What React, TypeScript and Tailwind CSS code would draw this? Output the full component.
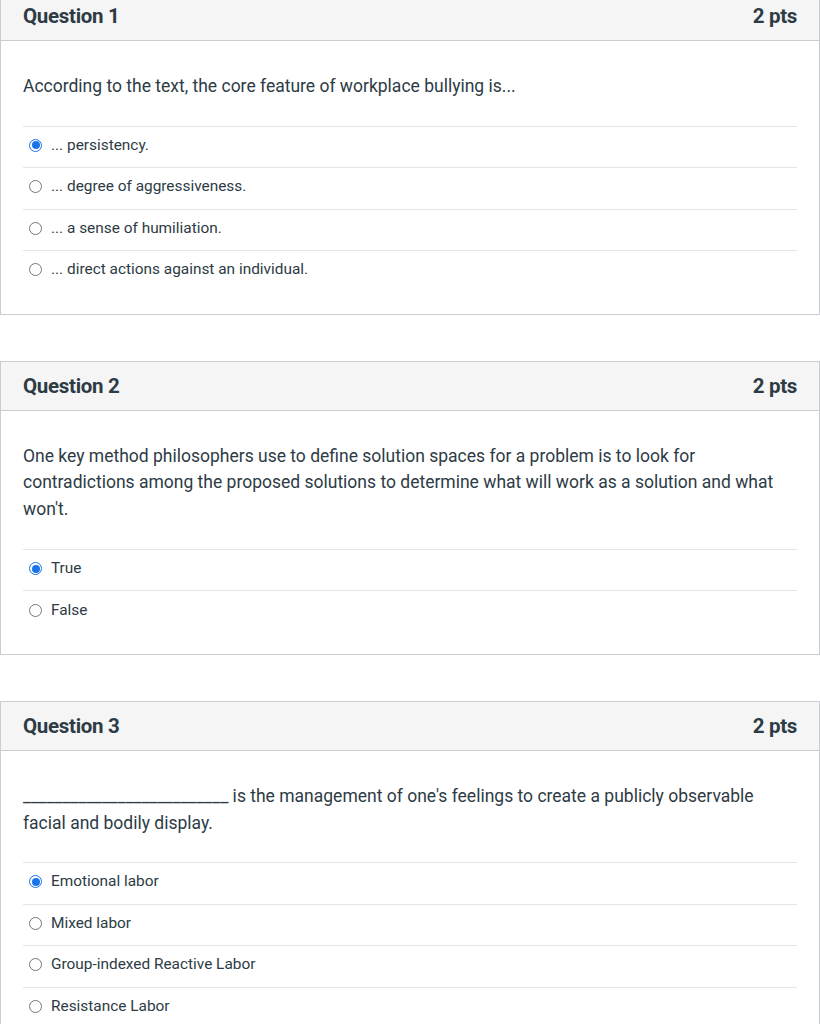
import React from 'react';

type Question = {
  title: string;
  points: string;
  text: React.ReactNode;
  answers: string[];
  selected: number;
};

const questions: Question[] = [
  {
    title: 'Question 1',
    points: '2 pts',
    text: 'According to the text, the core feature of workplace bullying is...',
    answers: [
      '... persistency.',
      '... degree of aggressiveness.',
      '... a sense of humiliation.',
      '... direct actions against an individual.',
    ],
    selected: 0,
  },
  {
    title: 'Question 2',
    points: '2 pts',
    text: "One key method philosophers use to define solution spaces for a problem is to look for contradictions among the proposed solutions to determine what will work as a solution and what won't.",
    answers: ['True', 'False'],
    selected: 0,
  },
  {
    title: 'Question 3',
    points: '2 pts',
    text: "__________________________ is the management of one's feelings to create a publicly observable facial and bodily display.",
    answers: ['Emotional labor', 'Mixed labor', 'Group-indexed Reactive Labor', 'Resistance Labor'],
    selected: 0,
  },
];

const Radio: React.FC<{ checked: boolean }> = ({ checked }) =>
  checked ? (
    <span className="w-[13px] h-[13px] rounded-full border-[1.5px] border-[#1a73e8] flex items-center justify-center shrink-0">
      <span className="w-[8px] h-[8px] rounded-full bg-[#1a73e8]"></span>
    </span>
  ) : (
    <span className="w-[13px] h-[13px] rounded-full border border-[#767676] bg-white shrink-0"></span>
  );

const QuestionCard: React.FC<{ q: Question; first?: boolean }> = ({ q, first }) => (
  <div className={`border border-[#c7cdd1] bg-white ${first ? '-mt-[9px]' : 'mt-[46px]'}`}>
    <div className="h-[49px] bg-[#f5f5f5] border-b border-[#c7cdd1] flex items-center justify-between px-[22px] pt-[1px]">
      <h2 className="text-[20.5px] font-bold text-[#2d3b45] tracking-[-0.3px]">{q.title}</h2>
      <span className="text-[20.5px] font-bold text-[#2d3b45] tracking-[-0.3px]">{q.points}</span>
    </div>
    <div className="px-[22px] pt-[32px] pb-[22px]">
      <p className="text-[17.5px] leading-[26.7px] text-[#2d3b45] pb-[26px]">{q.text}</p>
      <div>
        {q.answers.map((a, i) => (
          <div key={i} className="h-[41.5px] border-t border-[#e3e6e8] flex items-center gap-[9px] pl-[6px] pb-[3px]">
            <Radio checked={i === q.selected} />
            <span className="text-[15.4px] text-[#2d3b45]">{a}</span>
          </div>
        ))}
      </div>
    </div>
  </div>
);

export default function App() {
  return (
    <div className="w-[820px] min-h-[1024px] bg-white overflow-hidden" style={{ fontFamily: 'Roboto, "Liberation Sans", sans-serif' }}>
      {questions.map((q, i) => (
        <QuestionCard key={i} q={q} first={i === 0} />
      ))}
    </div>
  );
}
